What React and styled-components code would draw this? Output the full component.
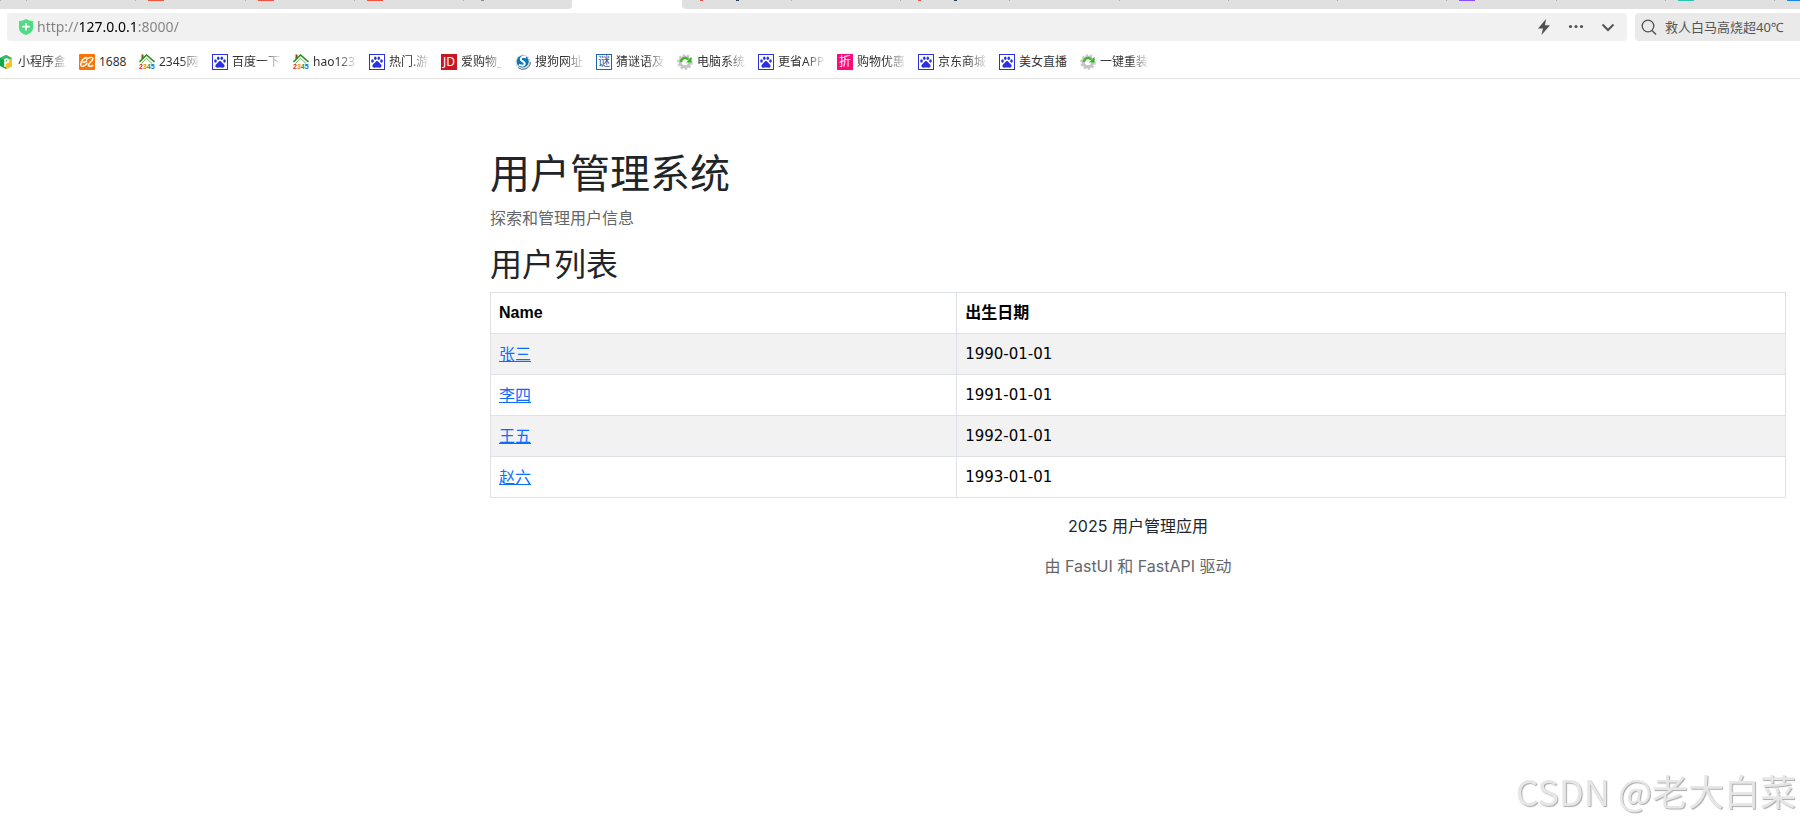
import React, { useState } from "react"
import styled, { createGlobalStyle } from "styled-components"

const GlobalStyle = createGlobalStyle`
    * {
        box-sizing: border-box;
    }
    body {
        margin: 0;
        background: #fff;
        color: #212529;
        font-family: Inter, "Noto Sans CJK SC", sans-serif;
        font-size: 16px;
        line-height: 24px;
        overflow-x: hidden;
    }
`

const tabs = [
    {},
    { mark: "#f5533d" },
    { mark: "#f5533d" },
    { mark: "#f5533d" },
    { dots: ["#8a8a8a"] },
    { active: true },
    { dots: ["#e8574a", "#243b63"] },
    {},
    { dots: ["#e8574a", "#243b63"] },
    {},
    {},
    {},
    {},
    { mark: "#8a4dff" },
    {},
    { mark: "#2bc4b6" },
]

const bookmarks = [
    { icon: "box", text: "小程序盒", width: 48, fade: true },
    { icon: "alibaba", text: "1688", width: 27 },
    { icon: "house", text: "2345网", width: 40, fade: true },
    { icon: "paw", text: "百度一下", width: 48, fade: true },
    { icon: "house", text: "hao123", width: 43, fade: true },
    { icon: "paw", text: "热门.游", width: 39, fade: true },
    { icon: "jd", text: "爱购物_", width: 41, fade: true },
    { icon: "sogou", text: "搜狗网址", width: 48, fade: true },
    { icon: "riddle", text: "猜谜语及", width: 48, fade: true },
    { icon: "gear", text: "电脑系统", width: 48, fade: true },
    { icon: "paw", text: "更省APP", width: 46, fade: true },
    { icon: "discount", text: "购物优惠", width: 48, fade: true },
    { icon: "paw", text: "京东商城", width: 48, fade: true },
    { icon: "paw", text: "美女直播", width: 48 },
    { icon: "gear", text: "一键重装", width: 48, fade: true },
]

const users = [
    { id: 1, name: "张三", birthday: "1990-01-01" },
    { id: 2, name: "李四", birthday: "1991-01-01" },
    { id: 3, name: "王五", birthday: "1992-01-01" },
    { id: 4, name: "赵六", birthday: "1993-01-01" },
]

const BookmarkIcon = ({ type }) => {
    switch (type) {
        case "box":
            return (
                <Svg viewBox="0 0 16 16">
                    <path d="M8 1L14 4V12L8 15L2 12V4Z" fill="#12a84c" />
                    <path d="M8 1L14 4V12L8 15Z" fill="#f9c31b" />
                    <path d="M2 4L8 1L14 4L8 7Z" fill="#37b96b" />
                    <path
                        d="M7 13V5.5C11 4 12 8 7.5 9"
                        stroke="#fff"
                        strokeWidth="1.6"
                        fill="none"
                    />
                </Svg>
            )
        case "alibaba":
            return (
                <Svg viewBox="0 0 16 16">
                    <rect width="16" height="16" rx="1" fill="#ff7300" />
                    <path
                        d="M7.5 6C9.500 4 8 3 6 4C3 5.500 1 9.500 2 11.500C3 13.500 6.500 11.500 8 9.500M4 8.500L7.500 7.500"
                        stroke="#fff"
                        strokeWidth="1.400"
                        strokeLinecap="round"
                        fill="none"
                    />
                    <path
                        d="M9.500 4C13 2.500 15 4 13 6.500L9.500 10.500C8.500 12.500 11 12.800 14 11.500"
                        stroke="#fff"
                        strokeWidth="1.400"
                        strokeLinecap="round"
                        fill="none"
                    />
                </Svg>
            )
        case "house":
            return (
                <Svg viewBox="0 0 16 16">
                    <path d="M3.500 0.500V5" stroke="#8a4a1c" strokeWidth="2" />
                    <path
                        d="M0.500 8L7.500 1L15.500 8"
                        stroke="#2f8f1c"
                        strokeWidth="1.600"
                        fill="none"
                    />
                    <path
                        d="M2.500 9.500L7.500 4.200L13 9.500"
                        stroke="#5fb54e"
                        fill="none"
                    />
                    <IconDigits x="0" y="15">
                        <tspan fill="#e8220d">2</tspan>
                        <tspan fill="#f08a00">3</tspan>
                        <tspan fill="#1c9b2c">4</tspan>
                        <tspan fill="#1567c8">5</tspan>
                    </IconDigits>
                </Svg>
            )
        case "paw":
            return (
                <Svg viewBox="0 0 16 16">
                    <rect
                        x="0.5"
                        y="0.5"
                        width="15"
                        height="15"
                        fill="#fff"
                        stroke="#2932e1"
                    />
                    <g fill="#2932e1">
                        <ellipse cx="3.500" cy="7" rx="1.300" ry="1.700" />
                        <ellipse cx="6.300" cy="4.200" rx="1.300" ry="1.800" />
                        <ellipse cx="9.800" cy="4.200" rx="1.300" ry="1.800" />
                        <ellipse cx="12.500" cy="7" rx="1.300" ry="1.700" />
                        <path d="M8 7C6.500 7 6 9 4.500 10C2.500 11.500 3.500 14 5.500 13.700C7.500 13.300 8.500 13.300 10.500 13.700C12.500 14 13.500 11.500 11.500 10C10 9 9.500 7 8 7Z" />
                    </g>
                </Svg>
            )
        case "sogou":
            return (
                <Svg viewBox="0 0 16 16">
                    <circle cx="8" cy="8" r="7.500" fill="#d9dde0" />
                    <path
                        d="M3 13.600A7.500 7.500 0 0 0 15.400 8"
                        stroke="#6c7378"
                        fill="none"
                    />
                    <circle cx="7.700" cy="7.500" r="6" fill="#0878bd" />
                    <path
                        d="M11 3.500C7 1.500 4.500 4.500 6.500 6.500C8.500 8 10.500 8.500 9.500 10.500C8.500 12.500 5.500 11.500 4 10.500"
                        stroke="#fff"
                        strokeWidth="2"
                        fill="none"
                    />
                </Svg>
            )
        case "gear":
            return (
                <Svg viewBox="0 0 16 16">
                    <circle
                        cx="8"
                        cy="8"
                        r="6.800"
                        fill="none"
                        stroke="#c9c9ce"
                        strokeWidth="2"
                        strokeDasharray="2.600 1.600"
                    />
                    <circle
                        cx="8"
                        cy="8"
                        r="4.800"
                        fill="#fff"
                        stroke="#c3c3c9"
                        strokeWidth="3"
                    />
                    <path
                        d="M4 8C4.500 3.500 9 3 11 5.500"
                        stroke="#45b52c"
                        strokeWidth="2.500"
                        fill="none"
                    />
                    <path d="M14.500 3V8.500H9Z" fill="#2fb91d" />
                </Svg>
            )
        case "jd":
            return <TextIcon $bg="#c81623">JD</TextIcon>
        case "discount":
            return <TextIcon $bg="#ff0a7d">折</TextIcon>
        default:
            return (
                <TextIcon $bg="#fff" $color="#1359a5" $border="#1f64ad">
                    谜
                </TextIcon>
            )
    }
}

const App = () => {
    const [url, setUrl] = useState("http://127.0.0.1:8000/")
    const [keyword, setKeyword] = useState("")

    return (
        <>
            <GlobalStyle />
            <TabStrip>
                <EdgeTab $width={26} />
                {tabs.map((tab, index) => (
                    <Tab
                        key={index}
                        $active={tab.active}
                        $before={tabs[index + 1]?.active}
                        $after={tabs[index - 1]?.active}
                    >
                        {tab.mark && <TabMark $color={tab.mark} />}
                        {tab.dots?.map((color) => (
                            <TabDot key={color} $color={color} />
                        ))}
                    </Tab>
                ))}
                <EdgeTab $width={26}>
                    <TabMark $color="#1683fb" />
                </EdgeTab>
            </TabStrip>
            <Toolbar>
                <AddressBar>
                    <ShieldIcon viewBox="0 0 14 16">
                        <path
                            d="M0 2C3 2 5 1 7 0C9 1 11 2 14 2V9C14 12.500 10.500 15 7 16C3.500 15 0 12.500 0 9Z"
                            fill="#4fdc83"
                        />
                        <path
                            d="M7 4V11.500M3.200 7.700H10.800"
                            stroke="#fff"
                            strokeWidth="1.800"
                        />
                    </ShieldIcon>
                    <AddressInput
                        aria-label="地址"
                        value={url}
                        onChange={(e) => setUrl(e.target.value)}
                    />
                    <IconButton aria-label="加速">
                        <Svg viewBox="0 0 16 16">
                            <path
                                d="M10 0L2 9.500H7L5.500 16L14 6.300H9Z"
                                fill="#505050"
                            />
                        </Svg>
                    </IconButton>
                    <IconButton aria-label="更多">
                        <Svg viewBox="0 0 16 16">
                            <g fill="#555">
                                <circle cx="2.500" cy="7.500" r="1.600" />
                                <circle cx="8" cy="7.500" r="1.600" />
                                <circle cx="13.500" cy="7.500" r="1.600" />
                            </g>
                        </Svg>
                    </IconButton>
                    <IconButton aria-label="展开">
                        <Svg viewBox="0 0 16 16">
                            <path
                                d="M2.500 5.500L8 11L13.500 5.500"
                                stroke="#555"
                                strokeWidth="2"
                                fill="none"
                            />
                        </Svg>
                    </IconButton>
                </AddressBar>
                <SearchBar>
                    <Svg viewBox="0 0 16 16">
                        <circle
                            cx="7"
                            cy="7"
                            r="5.800"
                            stroke="#505050"
                            strokeWidth="1.300"
                            fill="none"
                        />
                        <path
                            d="M11 11.500L15 15.500"
                            stroke="#505050"
                            strokeWidth="1.400"
                        />
                    </Svg>
                    <SearchInput
                        aria-label="搜索"
                        placeholder="救人白马高烧超40℃"
                        value={keyword}
                        onChange={(e) => setKeyword(e.target.value)}
                    />
                </SearchBar>
            </Toolbar>
            <BookmarkBar>
                {bookmarks.map((item) => (
                    <Bookmark key={item.text} href="#">
                        <BookmarkIcon type={item.icon} />
                        <BookmarkText $width={item.width} $fade={item.fade}>
                            {item.text}
                        </BookmarkText>
                    </Bookmark>
                ))}
            </BookmarkBar>
            <Main>
                <Title>用户管理系统</Title>
                <Muted>探索和管理用户信息</Muted>
                <SubTitle>用户列表</SubTitle>
                <Table>
                    <thead>
                        <tr>
                            <HeadCell $width="36%">Name</HeadCell>
                            <HeadCell>出生日期</HeadCell>
                        </tr>
                    </thead>
                    <tbody>
                        {users.map((user) => (
                            <Row key={user.id}>
                                <Cell>
                                    <UserLink href={`#/user/${user.id}`}>
                                        {user.name}
                                    </UserLink>
                                </Cell>
                                <DateCell>{user.birthday}</DateCell>
                            </Row>
                        ))}
                    </tbody>
                </Table>
                <Footer>
                    <FooterText>2025 用户管理应用</FooterText>
                    <Muted>由 FastUI 和 FastAPI 驱动</Muted>
                </Footer>
            </Main>
            <Watermark>CSDN @老大白菜</Watermark>
        </>
    )
}

const TabStrip = styled.div`
    display: flex;
    height: 9px;
    overflow: hidden;
`

const Tab = styled.div`
    display: flex;
    flex: 1;
    min-width: 0;
    background: ${({ $active }) => ($active ? "#fff" : "#e0e0e0")};
    border-radius: ${({ $before, $after }) =>
        $before ? "0 0 4px 0" : $after ? "0 0 0 4px" : "0"};

    &::before {
        content: "";
        width: 1px;
        height: 1px;
        margin-right: 12px;
        background: ${({ $active, $after }) =>
            $active || $after ? "transparent" : "#aaa"};
    }
`

const EdgeTab = styled(Tab)`
    flex: 0 0 ${({ $width }) => $width}px;
`

const TabMark = styled.span`
    width: 16px;
    height: 1px;
    background: ${({ $color }) => $color};
`

const TabDot = styled.span`
    width: 3px;
    height: 1px;
    margin: 0 28px 0 5px;
    background: ${({ $color }) => $color};
`

const Toolbar = styled.div`
    display: flex;
    gap: 8px;
    padding: 4px 0 4px 7px;
`

const AddressBar = styled.div`
    display: flex;
    flex: 1;
    align-items: center;
    height: 28px;
    padding: 0 11px 0 12px;
    background: #f1f1f1;
    border-radius: 4px;
`

const Svg = styled.svg`
    display: block;
    flex: none;
    width: 16px;
    height: 16px;
`

const ShieldIcon = styled(Svg)`
    width: 14px;
`

/* the host part is darker than the rest of the address */
const AddressInput = styled.input`
    flex: 1;
    min-width: 0;
    height: 28px;
    margin-left: 4px;
    padding: 0 0 2px;
    border: 0;
    outline: 0;
    color: transparent;
    caret-color: #000;
    background: linear-gradient(
        to right,
        #808080 42px,
        #000 42px 101px,
        #808080 101px
    );
    background-clip: text;
    font-family: "Noto Sans", "Noto Sans CJK SC", sans-serif;
    font-size: 14px;
`

const IconButton = styled.button`
    display: flex;
    align-items: center;
    justify-content: center;
    width: 16px;
    height: 28px;
    margin-left: 16px;
    padding: 0;
    border: 0;
    background: none;
`

const SearchBar = styled.div`
    display: flex;
    align-items: center;
    gap: 8px;
    width: 165px;
    height: 28px;
    padding-left: 6px;
    background: #eaeaea;
    border-radius: 4px 0 0 4px;
`

const SearchInput = styled.input`
    flex: 1;
    min-width: 0;
    height: 28px;
    padding: 0;
    border: 0;
    outline: 0;
    color: #555;
    background: none;
    font-family: "Noto Sans", "Noto Sans CJK SC", sans-serif;
    font-size: 13px;

    &::placeholder {
        color: #555;
    }
`

const BookmarkBar = styled.nav`
    display: flex;
    align-items: center;
    gap: 13px;
    height: 34px;
    overflow: hidden;
    border-bottom: 1px solid #e2e2e2;
`

const Bookmark = styled.a`
    display: flex;
    flex: none;
    align-items: center;
    gap: 4px;
    color: #333;
    text-decoration: none;

    &:first-child {
        margin-left: -2px;
    }
`

const BookmarkText = styled.span`
    width: ${({ $width }) => $width}px;
    overflow: hidden;
    white-space: nowrap;
    font-family: "Noto Sans", "Noto Sans CJK SC", sans-serif;
    font-size: 12px;
    line-height: 16px;
    mask-image: ${({ $fade }) =>
        $fade
            ? "linear-gradient(to left, rgba(0, 0, 0, 0.1), #000 18px)"
            : "none"};
`

const TextIcon = styled.span`
    display: flex;
    align-items: center;
    justify-content: center;
    width: 16px;
    height: 16px;
    border: 1px solid ${({ $border, $bg }) => $border || $bg};
    color: ${({ $color }) => $color || "#fff"};
    background: ${({ $bg }) => $bg};
    font-family: "Noto Sans", "Noto Sans CJK SC", sans-serif;
    font-size: 12px;
    line-height: 14px;
`

const IconDigits = styled.text`
    font-family: "Liberation Sans", sans-serif;
    font-size: 7px;
    font-weight: bold;
`

const Main = styled.main`
    max-width: 1310px;
    margin-left: auto;
    padding: 71px 14px 0 0;
`

const Title = styled.h1`
    margin: 0 0 8px;
    font-size: 40px;
    font-weight: 400;
    line-height: 48px;
`

const SubTitle = styled.h2`
    margin: 0 0 8px;
    font-size: 32px;
    font-weight: 400;
    line-height: 38px;
`

const Muted = styled.p`
    margin: 0 0 16px;
    color: #646769;
`

const Table = styled.table`
    width: 100%;
    margin-bottom: 16px;
    border-collapse: collapse;
    table-layout: fixed;
    color: #000;
`

const HeadCell = styled.th`
    width: ${({ $width }) => $width || "auto"};
    padding: 8px;
    border: 1px solid #dee2e6;
    font-family: "Liberation Sans", "Noto Sans CJK SC", sans-serif;
    font-weight: 700;
    text-align: left;
`

const Row = styled.tr`
    &:nth-child(odd) {
        background: #f2f2f2;
    }
`

const Cell = styled.td`
    padding: 8px;
    border: 1px solid #dee2e6;
`

const DateCell = styled(Cell)`
    font-family: "DejaVu Sans", sans-serif;
    font-size: 15px;
`

const UserLink = styled.a`
    color: #0d6efd;
`

const Footer = styled.footer`
    text-align: center;
`

const FooterText = styled.p`
    margin: 0 0 16px;
`

/* sits over the page in the bottom right corner */
const Watermark = styled.div`
    position: fixed;
    right: 4px;
    bottom: 11px;
    color: #e6e6e6;
    font-family: "Noto Sans CJK SC", sans-serif;
    font-size: 36px;
    line-height: 48px;
    text-shadow: 1px 1px 1px #aaa;
    pointer-events: none;
`

export default App
